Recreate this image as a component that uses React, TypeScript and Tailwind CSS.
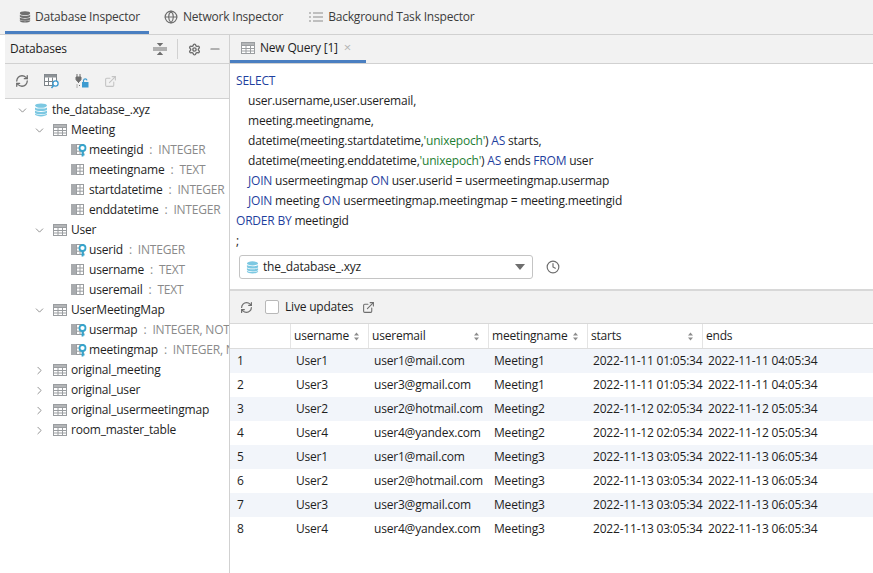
import { ChevronDown, ChevronRight, Minus, Settings, RefreshCw, ExternalLink, Globe, Clock } from 'lucide-react';

const FONT = "font-['Open_Sans','Noto_Sans',sans-serif]";

/* ─── Small drawn icons ─── */
function DbIcon({ color = '#6e6e6e', size = 14 }: { color?: string; size?: number }) {
  return (
    <svg width={size} height={size} viewBox="0 0 14 14" className="shrink-0">
      <ellipse cx="7" cy="2.6" rx="6" ry="2.2" fill={color} />
      <path d="M1 4.4c1 1.6 11 1.6 12 0v2.2c-1 2-11 2-12 0z" fill={color} />
      <path d="M1 7.6c1 1.8 11 1.8 12 0v2.2c-1 2-11 2-12 0z" fill={color} />
      <path d="M1 10.6c1 1.8 11 1.8 12 0v1c-1 2.4-11 2.4-12 0z" fill={color} />
    </svg>
  );
}

function TableIcon() {
  return (
    <svg width="14" height="12" viewBox="0 0 14 12" className="shrink-0">
      <rect x="0.5" y="0.5" width="13" height="11" fill="#fff" stroke="#9a9da0" />
      <rect x="0.5" y="0.5" width="13" height="3" fill="#b4b6b8" stroke="#9a9da0" />
      <path d="M5 3.5v8M9.5 3.5v8M.5 6.5h13M.5 9h13" stroke="#9a9da0" fill="none" />
    </svg>
  );
}

function ColumnIcon({ pk }: { pk?: boolean }) {
  return (
    <svg width="16" height="14" viewBox="0 0 16 14" className="shrink-0">
      <rect x="0" y="1" width="5" height="11" fill="#a8abae" />
      <rect x="5.5" y="1.5" width="7" height="10" fill="#fff" stroke="#9a9da0" />
      <path d="M5.5 5h7M5.5 8.2h7M9 1.5v10" stroke="#9a9da0" fill="none" />
      {pk && (
        <g>
          <circle cx="11.5" cy="5" r="3" fill="#fff" stroke="#35a4cc" strokeWidth="1.8" />
          <path d="M11.5 8v5.5M11.5 11.5h2" stroke="#35a4cc" strokeWidth="1.8" fill="none" />
        </g>
      )}
    </svg>
  );
}

function SortIcon() {
  return (
    <svg width="7" height="9" viewBox="0 0 7 9" className="shrink-0">
      <path d="M3.5 0.5 6 3.5H1zM3.5 8.5 1 5.5h5z" fill="#8c8c8c" />
    </svg>
  );
}

function CollapseIcon() {
  return (
    <svg width="14" height="14" viewBox="0 0 14 14">
      <path d="M0 6h14M0 8h14" stroke="#6e6e6e" fill="none" />
      <path d="M7 4.5 3.8 1h6.4zM7 9.5l3.2 3.5H3.8z" fill="#6e6e6e" />
    </svg>
  );
}

function QueryTableIcon() {
  return (
    <svg width="16" height="15" viewBox="0 0 16 15">
      <rect x="0.5" y="0.5" width="12" height="11" fill="#fff" stroke="#7d8388" />
      <rect x="0.5" y="0.5" width="12" height="3" fill="#8d9296" />
      <path d="M4.5 3.5v8M8.5 3.5v8M.5 7.5h12" stroke="#7d8388" fill="none" />
      <circle cx="11.5" cy="9.5" r="2.6" fill="#fff" stroke="#3d9bd0" strokeWidth="1.3" />
      <path d="M9.5 11.5 7.5 14" stroke="#3d9bd0" strokeWidth="1.5" fill="none" />
    </svg>
  );
}

function PlugLockIcon() {
  return (
    <svg width="14" height="14" viewBox="0 0 14 14">
      <path d="M2 0v3M5 0v3M1 3h5v2.5L4.5 7.5h-2L1 5.5zM3.5 7.5V9" stroke="#6e6e6e" fill="#6e6e6e" />
      <path d="M2 10.5v3M4.5 11v2" stroke="#6e6e6e" strokeDasharray="1 1" fill="none" />
      <rect x="7" y="8" width="6.5" height="5.5" fill="#3d9bd0" />
      <path d="M8.5 8V6.3a1.8 1.8 0 0 1 3.5 0" stroke="#3d9bd0" strokeWidth="1.2" fill="none" />
    </svg>
  );
}

/* ─── Data ─── */
type Row = { kind: 'db' | 'table' | 'col'; label: string; type?: string; pk?: boolean; open?: boolean };

const TREE: Row[] = [
  { kind: 'db', label: 'the_database_.xyz', open: true },
  { kind: 'table', label: 'Meeting', open: true },
  { kind: 'col', label: 'meetingid', type: 'INTEGER', pk: true },
  { kind: 'col', label: 'meetingname', type: 'TEXT' },
  { kind: 'col', label: 'startdatetime', type: 'INTEGER' },
  { kind: 'col', label: 'enddatetime', type: 'INTEGER' },
  { kind: 'table', label: 'User', open: true },
  { kind: 'col', label: 'userid', type: 'INTEGER', pk: true },
  { kind: 'col', label: 'username', type: 'TEXT' },
  { kind: 'col', label: 'useremail', type: 'TEXT' },
  { kind: 'table', label: 'UserMeetingMap', open: true },
  { kind: 'col', label: 'usermap', type: 'INTEGER, NOT NULL', pk: true },
  { kind: 'col', label: 'meetingmap', type: 'INTEGER, NOT NULL', pk: true },
  { kind: 'table', label: 'original_meeting' },
  { kind: 'table', label: 'original_user' },
  { kind: 'table', label: 'original_usermeetingmap' },
  { kind: 'table', label: 'room_master_table' },
];

const RESULTS = [
  ['User1', 'user1@mail.com', 'Meeting1', '2022-11-11 01:05:34', '2022-11-11 04:05:34'],
  ['User3', 'user3@gmail.com', 'Meeting1', '2022-11-11 01:05:34', '2022-11-11 04:05:34'],
  ['User2', 'user2@hotmail.com', 'Meeting2', '2022-11-12 02:05:34', '2022-11-12 05:05:34'],
  ['User4', 'user4@yandex.com', 'Meeting2', '2022-11-12 02:05:34', '2022-11-12 05:05:34'],
  ['User1', 'user1@mail.com', 'Meeting3', '2022-11-13 03:05:34', '2022-11-13 06:05:34'],
  ['User2', 'user2@hotmail.com', 'Meeting3', '2022-11-13 03:05:34', '2022-11-13 06:05:34'],
  ['User3', 'user3@gmail.com', 'Meeting3', '2022-11-13 03:05:34', '2022-11-13 06:05:34'],
  ['User4', 'user4@yandex.com', 'Meeting3', '2022-11-13 03:05:34', '2022-11-13 06:05:34'],
];

const K = ({ children }: { children: string }) => <span className="text-[#1f3f9e]">{children}</span>;

/* ─── Tree row ─── */
function TreeRow({ row }: { row: Row }) {
  if (row.kind === 'col') {
    return (
      <div className="flex h-5 items-center whitespace-nowrap pl-[66px]">
        <ColumnIcon pk={row.pk} />
        <span className="ml-[2px] text-[#1e1e1e]">{row.label}</span>
        <span className="ml-[6px] text-[#8a8a8a]">:</span>
        <span className="ml-[6px] text-[#8a8a8a]">{row.type}</span>
      </div>
    );
  }
  const Chevron = row.open ? ChevronDown : ChevronRight;
  return (
    <div className={`flex h-5 items-center whitespace-nowrap ${row.kind === 'db' ? 'pl-[11px]' : 'pl-[28px]'}`}>
      <Chevron size={13} strokeWidth={1.5} className="shrink-0 text-[#7a7a7a]" />
      {row.kind === 'db' ? (
        <span className="ml-[5px] mr-[4px]"><DbIcon color="#7cc8e2" /></span>
      ) : (
        <span className="ml-[7px] mr-[4px]"><TableIcon /></span>
      )}
      <span className="text-[#1e1e1e]">{row.label}</span>
    </div>
  );
}

/* ─── Result table ─── */
const COLS = [
  { w: 'w-[61px]', label: '' },
  { w: 'w-[78px]', label: 'username' },
  { w: 'w-[120px]', label: 'useremail' },
  { w: 'w-[99px]', label: 'meetingname' },
  { w: 'w-[115px]', label: 'starts' },
  { w: 'flex-1', label: 'ends' },
];

function ResultTable() {
  return (
    <div className="flex-1 bg-white">
      <div className="flex h-[25px] border-b border-[#dcdcdc] text-[#1e1e1e]">
        {COLS.map((c, i) => (
          <div key={i} className={`${c.w} flex items-center justify-between border-r border-[#e4e4e4] pl-[3px] pr-[8px] last:border-r-0`}>
            <span>{c.label}</span>
            {c.label && c.label !== 'ends' && <SortIcon />}
          </div>
        ))}
      </div>
      {RESULTS.map((r, i) => (
        <div key={i} className={`flex h-6 items-center whitespace-nowrap text-[#1e1e1e] ${i % 2 === 0 ? 'bg-[#f2f5fa]' : 'bg-white'}`}>
          <div className="w-[61px] pl-[7px]">{i + 1}</div>
          <div className="w-[78px] pl-[5px]">{r[0]}</div>
          <div className="w-[120px] pl-[5px]">{r[1]}</div>
          <div className="w-[99px] pl-[5px]">{r[2]}</div>
          <div className="w-[115px] pl-[5px]">{r[3]}</div>
          <div className="flex-1 pl-[5px]">{r[4]}</div>
        </div>
      ))}
    </div>
  );
}

export default function App() {
  return (
    <div className={`${FONT} flex h-[573px] w-[873px] flex-col overflow-hidden bg-white text-[12px] tracking-[-0.2px]`}>
      {/* top tabs */}
      <div className="flex h-[35px] shrink-0 border-b border-[#d1d1d1] bg-[#f2f2f2] pl-[5px] text-[#3c3c3c]">
        <div className="flex w-[144px] items-center gap-[4px] border-b-[3px] border-[#4a7fc1] pl-[14px] pt-[3px]">
          <DbIcon size={12} />
          <span>Database Inspector</span>
        </div>
        <div className="flex items-center gap-[5px] pl-[15px] pt-[0px]">
          <Globe size={14} className="text-[#6e6e6e]" />
          <span>Network Inspector</span>
        </div>
        <div className="flex items-center gap-[5px] pl-[26px]">
          <svg width="14" height="10" viewBox="0 0 14 10">
            <path d="M0 1h2M4 1h10M0 5h2M4 5h10M0 9h2M4 9h10" stroke="#8c8c8c" fill="none" />
          </svg>
          <span>Background Task Inspector</span>
        </div>
      </div>

      <div className="flex min-h-0 flex-1">
        {/* left panel */}
        <div className="flex w-[230px] shrink-0 flex-col border-r border-[#d1d1d1] bg-white pl-[5px]">
          <div className="flex h-[29px] shrink-0 items-center border-b border-[#d1d1d1] bg-[#f2f2f2] pl-[5px] text-[#1e1e1e]">
            <span>Databases</span>
            <div className="ml-auto flex items-center pr-[7px]">
              <CollapseIcon />
              <div className="mx-[10px] h-[20px] w-px bg-[#d1d1d1]" />
              <Settings size={13} strokeWidth={2.6} className="text-[#6e6e6e]" />
              <Minus size={14} strokeWidth={2} className="ml-[7px] text-[#6e6e6e]" />
            </div>
          </div>
          <div className="flex h-[35px] shrink-0 items-center gap-[15px] border-b border-[#d1d1d1] bg-[#f2f2f2] pl-[10px]">
            <RefreshCw size={14} strokeWidth={2.2} className="text-[#6e6e6e]" />
            <QueryTableIcon />
            <PlugLockIcon />
            <ExternalLink size={13} className="text-[#c4c4c4]" />
          </div>
          <div className="min-h-0 flex-1 overflow-hidden pt-px">
            {TREE.map((row) => (
              <TreeRow key={row.label} row={row} />
            ))}
          </div>
        </div>

        {/* right panel */}
        <div className="flex min-w-0 flex-1 flex-col">
          <div className="flex h-[29px] shrink-0 border-b border-[#d1d1d1] bg-[#f2f2f2] text-[#1e1e1e]">
            <div className="flex w-[136px] items-center gap-[4px] border-b-[3px] border-[#4a7fc1] pl-[11px]">
              <TableIcon />
              <span className="ml-[1px]">New Query [1]</span>
              <span className="ml-[2px] text-[13px] text-[#b4b4b4]">×</span>
            </div>
          </div>

          {/* editor */}
          <div className="h-[191px] shrink-0 bg-white pl-[6px] pt-[7px] leading-[20px] text-[#1e1e1e]">
            <div><K>SELECT</K></div>
            <div className="pl-[12px]">user.username,user.useremail,</div>
            <div className="pl-[12px]">meeting.meetingname,</div>
            <div className="pl-[12px]">datetime(meeting.startdatetime,<span className="text-[#1e7e34]">'unixepoch'</span>) <K>AS</K> starts,</div>
            <div className="pl-[12px]">datetime(meeting.enddatetime,<span className="text-[#1e7e34]">'unixepoch'</span>) <K>AS</K> ends <K>FROM</K> user</div>
            <div className="pl-[12px]"><K>JOIN</K> usermeetingmap <K>ON</K> user.userid = usermeetingmap.usermap</div>
            <div className="pl-[12px]"><K>JOIN</K> meeting <K>ON</K> usermeetingmap.meetingmap = meeting.meetingid</div>
            <div><K>ORDER BY</K> meetingid</div>
            <div>;</div>
          </div>

          {/* database picker */}
          <div className="flex h-[34px] shrink-0 items-start bg-white pl-[9px]">
            <div className="flex h-[24px] w-[294px] items-center rounded-[3px] border border-[#c4c4c4] pl-[6px] pr-[7px]">
              <DbIcon color="#7cc8e2" size={13} />
              <span className="ml-[4px] text-[#1e1e1e]">the_database_.xyz</span>
              <span className="ml-auto h-0 w-0 border-x-[5px] border-t-[6px] border-x-transparent border-t-[#6e6e6e]" />
            </div>
            <Clock size={14} strokeWidth={2} className="ml-[13px] mt-[5px] text-[#6e6e6e]" />
          </div>

          {/* results */}
          <div className="flex h-[35px] shrink-0 items-center border-b border-t-[2px] border-[#d8d8d8] bg-[#f2f2f2] pl-[10px] text-[#1e1e1e]">
            <RefreshCw size={13} strokeWidth={2.2} className="text-[#6e6e6e]" />
            <span className="ml-[12px] h-[14px] w-[14px] rounded-[2px] border border-[#b8b8b8] bg-white" />
            <span className="ml-[6px]">Live updates</span>
            <ExternalLink size={13} strokeWidth={2} className="ml-[9px] text-[#6e6e6e]" />
          </div>
          <ResultTable />
        </div>
      </div>
    </div>
  );
}
